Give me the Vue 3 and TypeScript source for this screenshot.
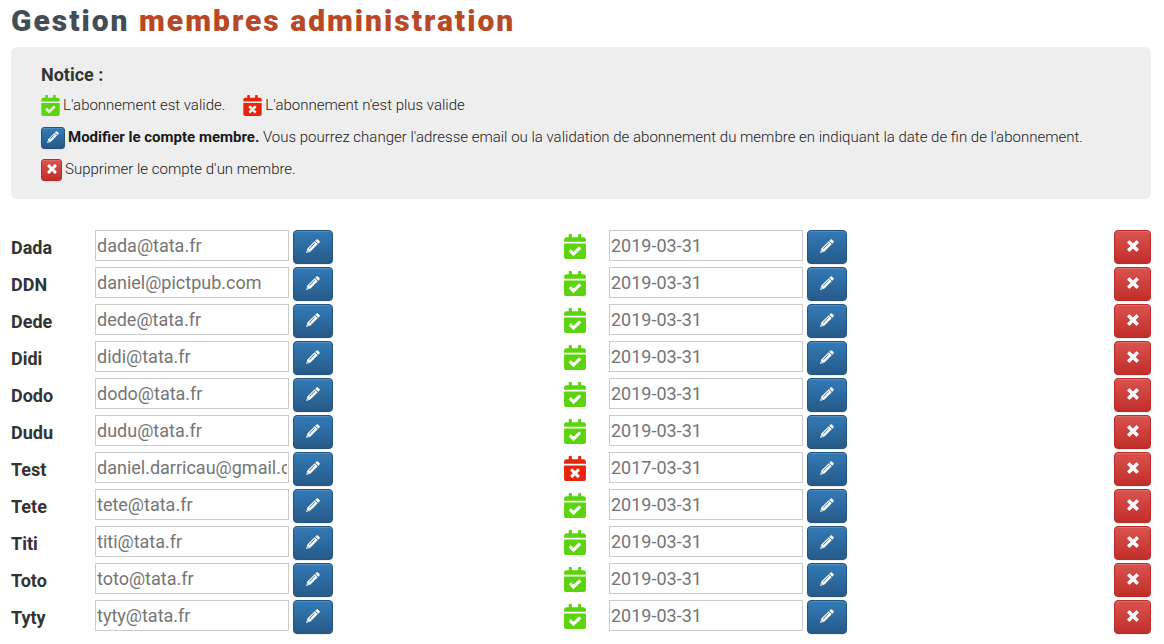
<script setup lang="ts">
import { reactive } from 'vue'

interface Member {
  name: string
  email: string
  end: string
  valid: boolean
}

const member = (name: string, email: string, end = '2019-03-31', valid = true): Member => ({ name, email, end, valid })

const members = reactive<Member[]>([
  member('Dada', 'dada@tata.fr'),
  member('DDN', 'daniel@pictpub.com'),
  member('Dede', 'dede@tata.fr'),
  member('Didi', 'didi@tata.fr'),
  member('Dodo', 'dodo@tata.fr'),
  member('Dudu', 'dudu@tata.fr'),
  member('Test', 'daniel.darricau@gmail.com', '2017-03-31', false),
  member('Tete', 'tete@tata.fr'),
  member('Titi', 'titi@tata.fr'),
  member('Toto', 'toto@tata.fr'),
  member('Tyty', 'tyty@tata.fr'),
])

const calendar =
  'M436 160H12c-6.6 0-12-5.4-12-12v-36c0-26.5 21.5-48 48-48h48V12c0-6.6 5.4-12 12-12h40c6.6 0 12 5.4 12 12v52h128V12c0-6.6 5.4-12 12-12h40c6.6 0 12 5.4 12 12v52h48c26.5 0 48 21.5 48 48v36c0 6.6-5.4 12-12 12zM12 192h424c6.6 0 12 5.4 12 12v260c0 26.5-21.5 48-48 48H48c-26.5 0-48-21.5-48-48V204c0-6.6 5.4-12 12-12z'
const calendarCheck =
  calendar +
  'm333.3 95.9l-28.2-28.4c-4.7-4.7-12.2-4.7-17 0L194.1 364.7l-46-46.4c-4.7-4.7-12.3-4.7-17 0l-28.4 28.1c-4.7 4.7-4.7 12.3 0 17l82.6 83.3c4.7 4.7 12.3 4.7 17 0l143-141.8c4.7-4.7 4.7-12.3 0-17z'
const calendarTimes =
  calendar +
  'm257.3 160l48.1-48.1c4.7-4.7 4.7-12.3 0-17l-28.3-28.3c-4.7-4.7-12.3-4.7-17 0L224 306.7l-48.1-48.1c-4.7-4.7-12.3-4.7-17 0l-28.3 28.3c-4.7 4.7-4.7 12.3 0 17l48.1 48.1-48.1 48.1c-4.7 4.7-4.7 12.3 0 17l28.3 28.3c4.7 4.7 12.3 4.7 17 0l48.1-48.1 48.1 48.1c4.7 4.7 12.3 4.7 17 0l28.3-28.3c4.7-4.7 4.7-12.3 0-17L269.3 352z'
const pencil =
  'M9.3 1.7 10.5.5Q11.2-.2 11.9.5L13.5 2.1Q14.2 2.8 13.5 3.5L12.3 4.7ZM8.7 2.3 11.7 5.3 4.5 12.6 .1 13.9 1.4 9.5ZM8.4 4.1 3.1 9.4 3.6 9.9 8.9 4.6ZM1.8 11.2 1.3 12.7 2.8 12.2Z'
const cross =
  'M2.7.4 5.5 3.2 8.3.4Q8.7 0 9.1.4L10.6 1.9Q11 2.3 10.6 2.7L7.8 5.5 10.6 8.3Q11 8.7 10.6 9.1L9.1 10.6Q8.7 11 8.3 10.6L5.5 7.8 2.7 10.6Q2.3 11 1.9 10.6L.4 9.1Q0 8.7.4 8.3L3.2 5.5.4 2.7Q0 2.3.4 1.9L1.9.4Q2.3 0 2.7.4Z'
</script>

<template>
  <main class="page">
    <h1>Gestion <span>membres administration</span></h1>

    <section class="notice">
      <h2>Notice :</h2>
      <p>
        <svg class="calendar small valid" viewBox="0 0 448 512" aria-hidden="true"><path :d="calendarCheck" /></svg>
        <span class="first">L'abonnement est valide.</span>
        <svg class="calendar small expired" viewBox="0 0 448 512" aria-hidden="true"><path :d="calendarTimes" /></svg>
        <span>L'abonnement n'est plus valide</span>
      </p>
      <p>
        <button type="button" class="btn edit mini" aria-label="Modifier">
          <svg class="pencil" viewBox="0 0 14 14" aria-hidden="true"><path fill-rule="evenodd" :d="pencil" /></svg>
        </button>
        <span><strong>Modifier le compte membre.</strong> Vous pourrez changer l'adresse email ou la validation de abonnement du membre en indiquant la date de fin de l'abonnement.</span>
      </p>
      <p>
        <button type="button" class="btn remove mini" aria-label="Supprimer">
          <svg class="cross" viewBox="0 0 11 11" aria-hidden="true"><path :d="cross" /></svg>
        </button>
        <span>Supprimer le compte d'un membre.</span>
      </p>
    </section>

    <table>
      <colgroup>
        <col class="c-name" />
        <col class="c-email" />
        <col class="c-state" />
        <col />
        <col class="c-remove" />
      </colgroup>
      <tbody>
        <tr v-for="m in members" :key="m.name">
          <th scope="row">{{ m.name }}</th>
          <td>
            <div class="field">
              <input v-model="m.email" type="text" :aria-label="`Email de ${m.name}`" />
              <button type="button" class="btn edit" :aria-label="`Modifier l'email de ${m.name}`">
                <svg class="pencil" viewBox="0 0 14 14" aria-hidden="true"><path fill-rule="evenodd" :d="pencil" /></svg>
              </button>
            </div>
          </td>
          <td>
            <svg class="calendar" :class="m.valid ? 'valid' : 'expired'" viewBox="0 0 448 512" aria-hidden="true">
              <path :d="m.valid ? calendarCheck : calendarTimes" />
            </svg>
          </td>
          <td>
            <div class="field">
              <input v-model="m.end" type="text" :aria-label="`Fin de l'abonnement de ${m.name}`" />
              <button type="button" class="btn edit" :aria-label="`Modifier la date de ${m.name}`">
                <svg class="pencil" viewBox="0 0 14 14" aria-hidden="true"><path fill-rule="evenodd" :d="pencil" /></svg>
              </button>
            </div>
          </td>
          <td>
            <button type="button" class="btn remove" :aria-label="`Supprimer ${m.name}`">
              <svg class="cross" viewBox="0 0 11 11" aria-hidden="true"><path :d="cross" /></svg>
            </button>
          </td>
        </tr>
      </tbody>
    </table>
  </main>
</template>

<style>
body {
  margin: 0;
  background: #fff;
}
</style>

<style scoped>
.page {
  padding: 0 13px 0 11px;
  font-family: Roboto, "Liberation Sans", sans-serif;
  font-size: 15px;
  font-weight: 300;
  color: #1a1a1a;
}
h1 {
  margin: 0;
  padding: 3px 0 8px;
  font-size: 30px;
  line-height: 36px;
  font-weight: 900;
  letter-spacing: 2px;
  color: #444c56;
}
h1 span {
  color: #b84826;
}
.notice {
  padding: 16px 30px;
  border-radius: 6px;
  background: #eee;
}
h2 {
  margin: 0 0 4px;
  font-size: 18px;
  line-height: 24px;
  font-weight: 700;
  color: #333;
}
.notice p {
  display: flex;
  align-items: center;
  gap: 3px;
  min-height: 28px;
  margin: 0 0 4px;
  line-height: 20px;
}
.notice p:last-child {
  margin-bottom: 0;
}
.notice strong {
  font-weight: 700;
}
.first {
  margin-right: 15px;
}
.calendar {
  display: block;
  flex: none;
  width: 22px;
  height: 25px;
  fill: currentColor;
}
.calendar.small {
  width: 19px;
  height: 21px;
}
.valid {
  color: #5bd30d;
}
.expired {
  color: #e8240c;
}
table {
  width: 100%;
  margin-top: 29px;
  table-layout: fixed;
  border-collapse: collapse;
}
.c-name {
  width: 84px;
}
.c-email {
  width: 469px;
}
.c-state {
  width: 45px;
}
.c-remove {
  width: 37px;
}
th,
td {
  box-sizing: border-box;
  height: 37px;
  padding: 0;
  vertical-align: middle;
}
th {
  padding-top: 2px;
  text-align: left;
  font-size: 18px;
  font-weight: 700;
  color: #333;
}
.field {
  display: flex;
  align-items: flex-start;
  gap: 4px;
}
input {
  box-sizing: border-box;
  width: 194px;
  height: 31px;
  padding: 0 1px;
  border: 1px solid #ccc;
  background: #fff;
  font: 400 18px Roboto, "Liberation Sans", sans-serif;
  color: #757575;
}
.btn {
  display: flex;
  flex: none;
  align-items: center;
  justify-content: center;
  box-sizing: border-box;
  width: 40px;
  height: 34px;
  padding: 0 0 2px;
  border: 1px solid;
  border-radius: 4px;
  color: #fff;
  box-shadow: inset 0 1px 0 rgba(255, 255, 255, 0.15), 0 1px 1px rgba(0, 0, 0, 0.075);
}
.btn svg {
  fill: currentColor;
}
.edit {
  border-color: #245580;
  background: linear-gradient(#337ab7, #265a88);
}
.remove {
  width: 37px;
  border-color: #b92c28;
  background: linear-gradient(#d9534f, #c12e2a);
}
.pencil {
  width: 14px;
  height: 14px;
}
.cross {
  width: 12px;
  height: 12px;
}
.mini {
  width: 24px;
  height: 22px;
  margin-top: 2px;
  border-radius: 3px;
}
.mini.remove {
  width: 21px;
}
.mini .pencil {
  width: 12px;
  height: 12px;
}
.mini .cross {
  width: 10px;
  height: 10px;
}
</style>
